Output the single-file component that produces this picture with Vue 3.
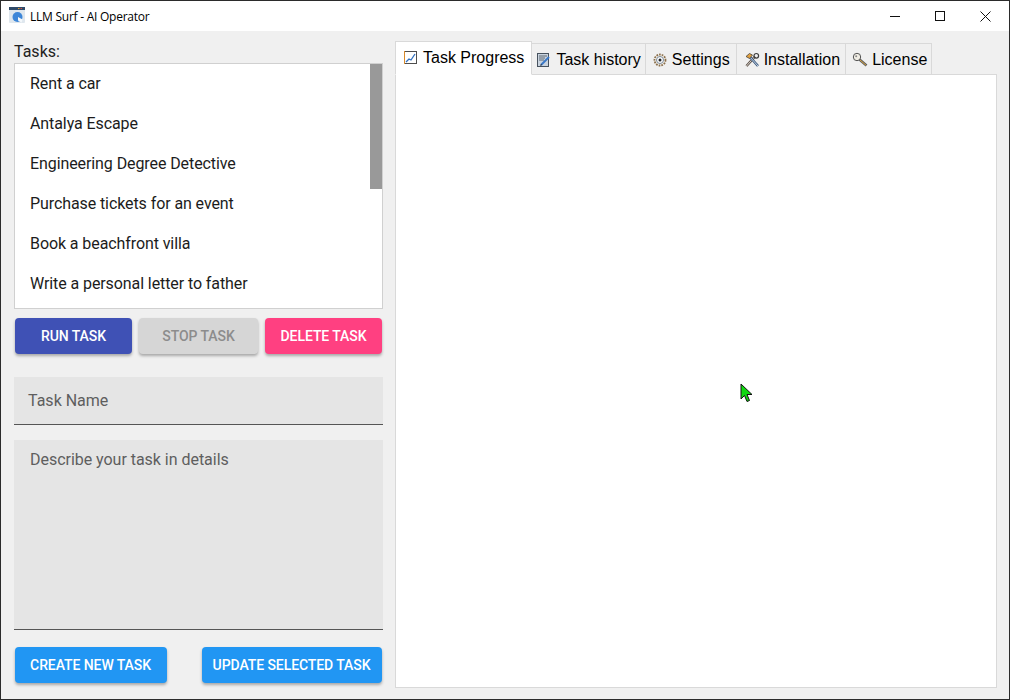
<script setup>
const tasks = ['Rent a car', 'Antalya Escape', 'Engineering Degree Detective', 'Purchase tickets for an event', 'Book a beachfront villa', 'Write a personal letter to father']
</script>

<template>
  <div class="window">
    <header class="titlebar">
      <svg class="app-icon" width="16" height="16" viewBox="0 0 16 16">
        <rect x="0" y="0" width="16" height="16" rx="1" fill="#dfe7ee" />
        <rect x="0" y="0" width="16" height="3" fill="#2f4a68" />
        <rect x="9" y="1" width="1.500" height="1" fill="#e8a030" />
        <rect x="11.500" y="1" width="1.500" height="1" fill="#d05040" />
        <circle cx="8.500" cy="10" r="5" fill="#3d86d8" />
        <path d="M9 10l4.500 2.500-1 3-3.500-2z" fill="#f4f8fb" />
      </svg>
      <span class="app-title">LLM Surf - AI Operator</span>
      <div class="controls">
        <svg class="ctl" width="10" height="10" viewBox="0 0 10 10"><path d="M0 5.500h10" stroke="#111" fill="none" /></svg>
        <svg class="ctl" width="10" height="10" viewBox="0 0 10 10"><rect x=".5" y=".5" width="9" height="9" stroke="#111" fill="none" /></svg>
        <svg class="ctl" width="11" height="11" viewBox="0 0 11 11"><path d="M.5.5l10 10M10.500.5l-10 10" stroke="#111" fill="none" /></svg>
      </div>
    </header>

    <main class="content">
      <section class="left">
        <label class="tasks-label">Tasks:</label>
        <div class="listbox">
          <ul class="items">
            <li v-for="t in tasks" :key="t">{{ t }}</li>
          </ul>
          <div class="scroll-track"><div class="scroll-thumb"></div></div>
        </div>

        <div class="actions">
          <button class="btn run">RUN TASK</button>
          <button class="btn stop">STOP TASK</button>
          <button class="btn del">DELETE TASK</button>
        </div>

        <div class="field name">Task Name</div>
        <div class="field desc">Describe your task in details</div>

        <div class="bottom-actions">
          <button class="btn blue create">CREATE NEW TASK</button>
          <button class="btn blue update">UPDATE SELECTED TASK</button>
        </div>
      </section>

      <section class="right">
        <nav class="tabs">
          <div class="tab active">
            <svg width="16" height="16" viewBox="0 0 16 16">
              <rect x="1.500" y="1.500" width="12" height="12" fill="#fff" stroke="#4e4e4e" />
              <path d="M1.500 1v13" stroke="#d98a2b" />
              <path d="M3 12l3-3 2 1 4-6" fill="none" stroke="#2f6fc0" stroke-width="1.300" />
            </svg>
            <span>Task Progress</span>
          </div>
          <div class="tab history">
            <svg width="16" height="16" viewBox="0 0 16 16">
              <rect x="1.500" y="1.500" width="11" height="13" fill="#c9d3de" stroke="#47525e" />
              <path d="M3 4h8M3 6h6M3 8h5" stroke="#5e6873" />
              <path d="M5 13l8-8" stroke="#3a78c8" stroke-width="2" />
              <path d="M4 14l1-2 1 1z" fill="#222" />
            </svg>
            <span>Task history</span>
          </div>
          <div class="tab settings">
            <svg width="16" height="16" viewBox="0 0 16 16">
              <circle cx="8" cy="8" r="5.500" fill="#f4efe6" stroke="#8a6f4c" stroke-width="1.800" stroke-dasharray="1.700 1" />
              <circle cx="8" cy="8" r="3.500" fill="#fff" stroke="#7a8a9a" />
              <circle cx="8" cy="8" r="1.500" fill="#222" />
            </svg>
            <span>Settings</span>
          </div>
          <div class="tab install">
            <svg width="16" height="16" viewBox="0 0 16 16">
              <path d="M2.500 14L11 4.500" stroke="#5c5048" stroke-width="2.600" />
              <path d="M2.500 14L11 4.500" stroke="#e8e4dc" stroke-width=".9" />
              <path d="M14 14L6 5" stroke="#39587e" stroke-width="2.600" />
              <path d="M14 14L6 5" stroke="#d8e2ee" stroke-width=".9" />
              <path d="M2 4.500l3.500-3 3 1.500-3 3.500z" fill="#e0a040" stroke="#333" stroke-width=".7" />
              <circle cx="12.300" cy="3.800" r="2.300" fill="none" stroke="#3e3e3e" stroke-width="1.200" />
            </svg>
            <span>Installation</span>
          </div>
          <div class="tab license">
            <svg width="16" height="16" viewBox="0 0 16 16">
              <circle cx="5" cy="5" r="3.700" fill="#f0ede4" stroke="#555" />
              <circle cx="4.200" cy="4.200" r="1" fill="#888" />
              <path d="M7.500 7.500l7 6" stroke="#5f5f5f" stroke-width="2.600" />
              <path d="M8 8l6 5.200" stroke="#dca63e" stroke-width="1" />
            </svg>
            <span>License</span>
          </div>
        </nav>
        <div class="panel"></div>
      </section>
    </main>

    <svg class="cursor" width="14" height="21" viewBox="0 0 14 21">
      <path d="M1 1v15l3.500-3.500 2.500 6 2.500-1-2.500-6H12z" fill="#10d810" stroke="#111" stroke-width="1" />
    </svg>
  </div>
</template>

<style>
html, body { margin: 0; padding: 0; }
</style>

<style scoped>
.window {
  position: relative;
  box-sizing: border-box;
  width: 1010px;
  height: 700px;
  border: 1px solid #2b2b2b;
  background: #f0f0f0;
  display: flex;
  flex-direction: column;
  overflow: hidden;
}
.titlebar {
  height: 30px;
  background: #fff;
  display: flex;
  align-items: center;
  flex: none;
}
.app-icon { margin: -2px 5px 0 8px; flex: none; }
.app-title {
  font: 12px/16px "Open Sans", sans-serif;
  color: #000;
  letter-spacing: -0.25px;
  padding-top: 1px;
}
.controls {
  margin-left: auto;
  display: flex;
  align-items: center;
  margin-right: 18px;
  gap: 35px;
}
.ctl { display: block; }
.content {
  flex: 1;
  display: flex;
  padding-left: 13px;
  min-height: 0;
}
.left {
  width: 369px;
  display: flex;
  flex-direction: column;
  flex: none;
}
.tasks-label {
  font: 16px/19px Roboto, sans-serif;
  color: #222;
  height: 32px;
  padding-top: 11px;
  box-sizing: border-box;
}
.listbox {
  box-sizing: border-box;
  height: 246px;
  border: 1px solid #d0d0d0;
  background: #fff;
  display: flex;
  overflow: hidden;
}
.items {
  flex: 1;
  list-style: none;
  margin: 0;
  padding: 0;
}
.items li {
  height: 40px;
  padding-left: 15px;
  font: 16px/40px Roboto, sans-serif;
  letter-spacing: -0.09px;
  color: #1c1c1c;
  white-space: nowrap;
}
.scroll-track { width: 12px; flex: none; }
.scroll-thumb { height: 125px; background: #999; }
.actions {
  display: flex;
  gap: 7px;
  padding: 0 1px;
  margin-top: 9px;
}
.btn {
  box-sizing: border-box;
  height: 36px;
  border: 0;
  border-radius: 4px;
  padding: 0;
  font: 500 14px/36px Roboto, sans-serif;
  letter-spacing: -0.08px;
  color: #fff;
  box-shadow: 0 2px 3px rgba(0, 0, 0, .3);
  flex: none;
  white-space: nowrap;
}
.run { width: 117px; background: #3f51b5; }
.stop { width: 119px; background: #d6d6d6; color: #8c8c8c; }
.del { width: 117px; background: #ff4081; }
.field {
  box-sizing: border-box;
  background: #e5e5e5;
  border-bottom: 1px solid #555;
  font: 16px/19px Roboto, sans-serif;
  color: #5e5e5e;
}
.name {
  height: 48px;
  margin-top: 23px;
  padding: 14px 14px 0;
}
.desc {
  height: 190px;
  margin-top: 15px;
  padding: 10px 16px 0;
  letter-spacing: -0.03px;
}
.bottom-actions {
  display: flex;
  justify-content: space-between;
  padding: 0 1px;
  margin-top: 17px;
}
.blue { background: #2196f3; }
.create { width: 152px; padding-right: 1px; }
.update { width: 180px; padding-right: 1px; }
.right {
  width: 602px;
  margin-left: 12px;
  flex: none;
  display: flex;
  flex-direction: column;
  height: 657px;
  padding-top: 10px;
  box-sizing: border-box;
}
.tabs {
  display: flex;
  align-items: flex-end;
  height: 34px;
  flex: none;
  position: relative;
  z-index: 1;
}
.tab {
  box-sizing: border-box;
  height: 32px;
  border: 1px solid #d9d9d9;
  border-left-width: 0;
  background: #f0f0f0;
  display: flex;
  align-items: center;
  gap: 4px;
  padding: 2px 5px 0 6px;
  font: 16px/20px "Liberation Sans", sans-serif;
  color: #000;
  white-space: nowrap;
}
.tab svg { flex: none; }
.tab.history { padding-left: 4px; padding-right: 4px; }
.tab.settings { padding-right: 6px; }
.tab.install { padding-left: 7px; padding-right: 5px; }
.tab.license { padding-right: 4px; }
.tab.active {
  height: 34px;
  border-left-width: 1px;
  border-bottom-color: #fff;
  background: #fff;
  padding: 0 7px 0 7px;
}
.panel {
  flex: 1;
  margin-top: -1px;
  background: #fff;
  border: 1px solid #d9d9d9;
}
.cursor {
  position: absolute;
  left: 739px;
  top: 382px;
}
</style>
